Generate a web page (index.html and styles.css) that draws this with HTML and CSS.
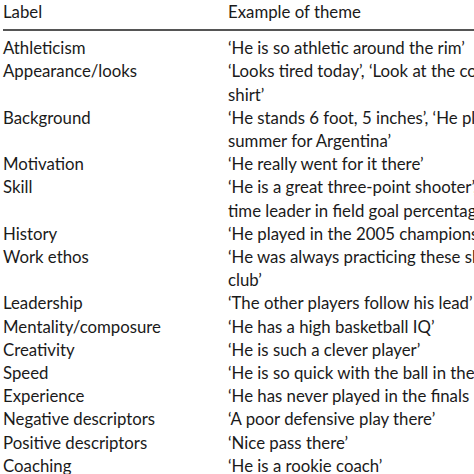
FILE: index.html
```html
<!DOCTYPE html>
<html>
<head>
<meta charset="utf-8">
<link rel="stylesheet" href="styles.css">
</head>
<body>
<div class="page">
  <div class="table">
    <div class="head">
      <div class="c1">Label</div>
      <div class="c2">Example of theme</div>
    </div>
    <div class="body">
      <div class="c1">Athleticism</div><div class="c2">‘He is so athletic around the rim’</div>
      <div class="c1">Appearance/looks</div><div class="c2">‘Looks tired today’, ‘Look at the color of his<br>shirt’</div>
      <div class="c1">Background</div><div class="c2">‘He stands 6 foot, 5 inches’, ‘He played last<br>summer for Argentina’</div>
      <div class="c1">Motivation</div><div class="c2">‘He really went for it there’</div>
      <div class="c1">Skill</div><div class="c2">‘He is a great three-point shooter’, ‘He is the all-<br>time leader in field goal percentage’</div>
      <div class="c1">History</div><div class="c2">‘He played in the 2005 championship game’</div>
      <div class="c1">Work ethos</div><div class="c2">‘He was always practicing these shots at his<br>club’</div>
      <div class="c1">Leadership</div><div class="c2">‘The other players follow his lead’</div>
      <div class="c1">Mentality/composure</div><div class="c2">‘He has a high basketball IQ’</div>
      <div class="c1">Creativity</div><div class="c2">‘He is such a clever player’</div>
      <div class="c1">Speed</div><div class="c2">‘He is so quick with the ball in the open court’</div>
      <div class="c1">Experience</div><div class="c2">‘He has never played in the finals before’</div>
      <div class="c1">Negative descriptors</div><div class="c2">‘A poor defensive play there’</div>
      <div class="c1">Positive descriptors</div><div class="c2">‘Nice pass there’</div>
      <div class="c1">Coaching</div><div class="c2">‘He is a rookie coach’</div>
    </div>
  </div>
</div>
</body>
</html>
```
FILE: styles.css
```css
html, body {
  margin: 0;
  padding: 0;
  background: #ffffff;
}
.page {
  width: 474px;
  height: 474px;
  overflow: hidden;
  font-family: "Lato", "Open Sans", sans-serif;
  font-size: 16.8px;
  color: #1a1a1a;
}
.table {
  padding-left: 3px;
  width: 800px;
}
.head, .body {
  display: grid;
  grid-template-columns: 225px auto;
  line-height: 23.2px;
  white-space: nowrap;
}
.head {
  padding-top: 0;
  padding-bottom: 6px;
  border-bottom: 2px solid #555;
}
.body {
  padding-top: 5px;
}
```
